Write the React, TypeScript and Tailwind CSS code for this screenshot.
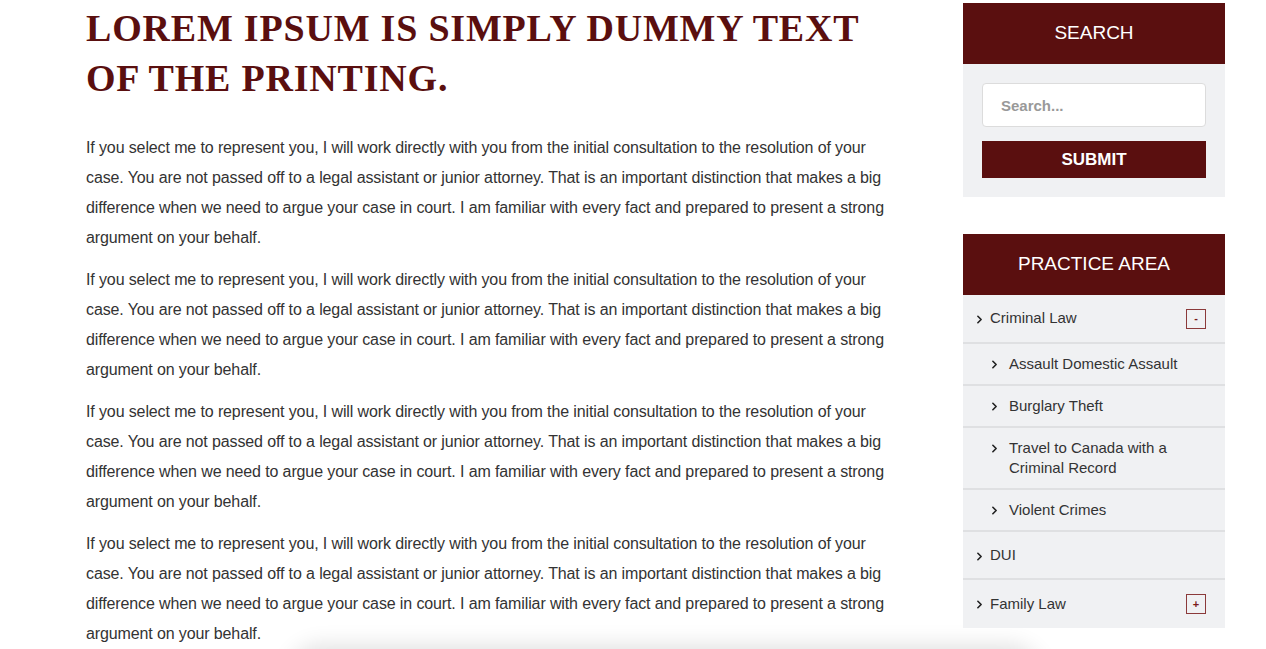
import { ChevronRight } from "lucide-react";

const para =
  "If you select me to represent you, I will work directly with you from the initial consultation to the resolution of your case. You are not passed off to a legal assistant or junior attorney. That is an important distinction that makes a big difference when we need to argue your case in court. I am familiar with every fact and prepared to present a strong argument on your behalf.";

type Item = { label: string; sub?: boolean; toggle?: "-" | "+" };

const items: Item[] = [
  { label: "Criminal Law", toggle: "-" },
  { label: "Assault Domestic Assault", sub: true },
  { label: "Burglary Theft", sub: true },
  { label: "Travel to Canada with a Criminal Record", sub: true },
  { label: "Violent Crimes", sub: true },
  { label: "DUI" },
  { label: "Family Law", toggle: "+" },
];

function WidgetTitle({ children }: { children: string }) {
  return (
    <div className="flex h-[61px] items-center justify-center bg-[#5a0f0f] text-[19px] text-white">
      {children}
    </div>
  );
}

export default function App() {
  return (
    <div
      className="min-h-screen bg-white"
      style={{ fontFamily: '"Liberation Sans", Arial, sans-serif' }}
    >
      <div className="flex pl-[86px] pt-[3px]">
        <main className="w-[800px]">
          <h1
            className="text-[38px] font-bold uppercase leading-[50px] tracking-[0.8px] text-[#5a0f0f]"
            style={{ fontFamily: '"Liberation Serif", "Times New Roman", serif' }}
          >
            Lorem Ipsum is simply dummy text of the printing.
          </h1>
          <div className="mt-[30px] space-y-[12px]">
            {[0, 1, 2, 3].map((i) => (
              <p key={i} className="text-[16px] leading-[30px] tracking-[-0.12px] text-[#333]">
                {para}
              </p>
            ))}
          </div>
        </main>

        <aside className="ml-[77px] w-[262px]">
          <WidgetTitle>SEARCH</WidgetTitle>
          <div className="bg-[#f0f1f3] px-[19px] pb-[19px] pt-[19px]">
            <input
              placeholder="Search..."
              className="h-[44px] w-full rounded-[4px] border border-[#dcdcdc] bg-white px-[18px] text-[15px] font-bold placeholder:text-[#999] outline-none"
            />
            <button className="mt-[14px] flex h-[37px] w-full items-center justify-center bg-[#5a0f0f] text-[17px] font-bold text-white">
              SUBMIT
            </button>
          </div>

          <div className="mt-[37px]">
            <WidgetTitle>PRACTICE AREA</WidgetTitle>
            <ul className="bg-[#f0f1f3] text-[15px] text-[#333]">
              {items.map((it, i) => (
                <li
                  key={it.label}
                  className={`flex items-center border-b-2 border-[#dfe0e2] pr-[19px] last:border-b-0 ${
                    it.sub
                      ? "min-h-[42px] py-[10px] pl-[25px]"
                      : i === 0
                        ? "h-[49px] pl-[10px]"
                        : "h-[48px] pl-[10px]"
                  }`}
                >
                  <ChevronRight
                    size={13}
                    strokeWidth={3}
                    className={`shrink-0 self-start text-[#222] ${it.sub ? "mt-[4px] mr-[8px]" : "mt-[18px] mr-[4px]"}`}
                  />
                  <span className={`flex-1 ${it.sub ? "leading-[20px]" : ""}`}>{it.label}</span>
                  {it.toggle && (
                    <span className="flex h-[20px] w-[20px] items-center justify-center border border-[#8b3a3a] text-[11px] font-bold leading-none text-[#7a1a1a]">
                      {it.toggle}
                    </span>
                  )}
                </li>
              ))}
            </ul>
          </div>
        </aside>
      </div>
      <div className="ml-[290px] mt-[4px] h-[60px] w-[750px] rounded-full bg-white shadow-[0_-8px_22px_rgba(0,0,0,0.12)]" />
    </div>
  );
}
